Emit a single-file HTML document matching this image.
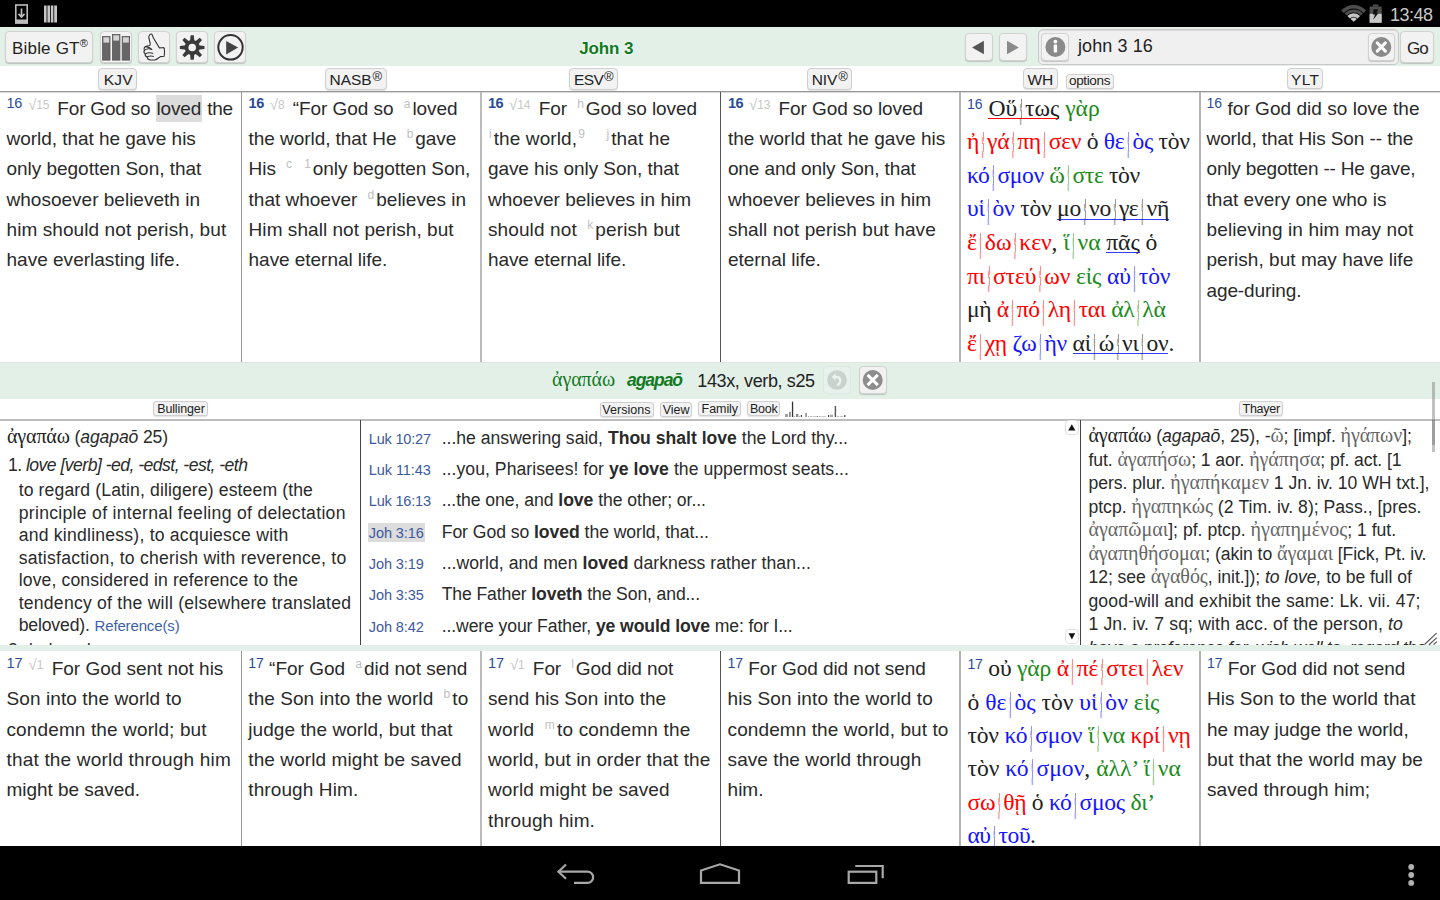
<!DOCTYPE html>
<html><head><meta charset="utf-8">
<style>
*{margin:0;padding:0;box-sizing:border-box}
html,body{width:1440px;height:900px;overflow:hidden;background:#fff;font-family:"Liberation Sans",sans-serif;color:#222}
.abs{position:absolute}
.ln{position:absolute;white-space:nowrap;line-height:normal}
.mk{display:inline-block;width:0;height:0;vertical-align:baseline}
#status{left:0;top:0;width:1440px;height:27px;background:#000}
#toolbar{left:0;top:27px;width:1440px;height:39px;background:#e3f0e8}
#nav{left:0;top:846px;width:1440px;height:54px;background:#000}
.btn{position:absolute;background:#f2f2f2;border:1px solid #d2d2d2;border-radius:4px;box-shadow:0 1px 1px rgba(0,0,0,.18)}
.lbl{position:absolute;background:#f2f2f2;border:1px solid #cfcfcf;border-radius:4px;box-shadow:0 1px 1px rgba(0,0,0,.12);font-size:15px;color:#222;text-align:center;line-height:19px}
.lbls{position:absolute;background:#f2f2f2;border:1px solid #cfcfcf;border-radius:3px;box-shadow:0 1px 1px rgba(0,0,0,.12);font-size:12.5px;color:#333;text-align:center;line-height:13px}
.hline{position:absolute;height:1px}
.vline{position:absolute;width:1px}
/* text classes */
.v{font-size:19px;color:#2a2a2a}
.vn{font-size:14.5px;color:#2a4b98;vertical-align:7px;margin-right:6px}
.vnb{font-weight:bold;letter-spacing:-0.5px}
.vn2{font-size:14px;color:#2a4b98;vertical-align:7px}
.sq{font-size:15px;vertical-align:-1px;line-height:0;margin-right:0}
.vr{font-size:12px;color:#c8c8c8;vertical-align:6px;margin-right:3px}
.fn{font-size:12px;color:#c0c0c0;vertical-align:7px;margin:0 2px 0 5px}
.fn0{margin-left:1px}
.hl{background:#dcdcdc;padding:3px 1px 3px 1px}
.gk{font-family:"Liberation Serif",serif;font-size:23.6px;color:#222}
.gk .vn2{font-family:"Liberation Sans",sans-serif;font-size:14px}
.gk .k{color:#222}
.gk .r{color:#f00}
.gk .b{color:#1515ff}
.gk .gr{color:#1a8a1a}
.gk .ur{background:linear-gradient(#f00,#f00) 0 calc(100% - 1.2px)/100% 1.3px no-repeat}
.gk .ub{background:linear-gradient(#3a3aff,#3a3aff) 0 calc(100% - 1.2px)/100% 1.3px no-repeat}
.bb{display:inline-block;width:8px;height:19.6px;vertical-align:-3.9px;opacity:.45;background:linear-gradient(currentColor,currentColor) 3.5px 0/1.2px 8.8px no-repeat,linear-gradient(currentColor,currentColor) 3.5px 11px/1.2px 8.6px no-repeat}
.lx{font-size:17.6px;color:#2a2a2a}
.gkl{font-family:"Liberation Serif",serif;font-size:20px;color:#222}
.gkd{font-family:"Liberation Serif",serif;font-size:20px;color:#222}
.gkt{font-family:"Liberation Serif",serif;font-size:20px;color:#666}
.rf{font-size:15px;color:#3f5fa6}
.rfl{font-size:14.5px;color:#3a5aa0}
.hgk{font-family:"Liberation Serif",serif;font-size:20px;color:#127a22}
.hbi{font-size:17.5px;font-weight:bold;font-style:italic;color:#127a22}
.hnum{font-size:18px;color:#222}
.tb{font-size:17px;color:#222}
.reg{font-size:11px;vertical-align:7px}
.lab{font-size:15.5px;color:#222}
.labm{font-size:13.5px;color:#222}
.labs{font-size:12.5px;color:#222}
.reg2{font-size:13px;vertical-align:4px;line-height:0;margin-left:1px}
.title{font-size:17px;font-weight:bold;color:#0e7a1e;text-shadow:0 0 2px #fff,0 0 2px #fff}
.srch{font-size:18px;color:#222}
.time{font-size:18px;color:#c8c8c8}
</style></head><body>
<div id="status" class="abs"></div>
<div id="toolbar" class="abs"></div>
<div id="nav" class="abs"></div>
<!-- toolbar buttons -->
<div class="btn" style="left:5px;top:31px;width:88px;height:32px"></div>
<div class="btn" style="left:100px;top:31px;width:32px;height:32px"></div>
<div class="btn" style="left:138px;top:31px;width:32px;height:32px"></div>
<div class="btn" style="left:176px;top:31px;width:32px;height:32px"></div>
<div class="btn" style="left:214px;top:31px;width:32px;height:32px"></div>
<div class="btn" style="left:965px;top:33px;width:28px;height:28px"></div>
<div class="btn" style="left:999px;top:33px;width:28px;height:28px"></div>
<div class="abs" style="left:1038px;top:29px;width:361px;height:36px;background:#f0f0f0;border:1px solid #c8c8c8;border-radius:5px;box-shadow:inset 0 1px 1px rgba(0,0,0,.08)"></div>
<div class="btn" style="left:1041px;top:33px;width:28px;height:28px"></div>
<div class="btn" style="left:1368px;top:33px;width:27px;height:28px"></div>
<div class="btn" style="left:1400px;top:31px;width:34px;height:32px"></div>
<!-- version labels -->
<div class="lbl" style="left:98px;top:68px;width:39px;height:21.5px"></div>
<div class="lbl" style="left:325px;top:68px;width:62px;height:21.5px"></div>
<div class="lbl" style="left:568.5px;top:68px;width:49px;height:21.5px"></div>
<div class="lbl" style="left:807px;top:68px;width:45px;height:21.5px"></div>
<div class="lbl" style="left:1023px;top:68px;width:35px;height:21px"></div>
<div class="lbls" style="left:1066px;top:73.5px;width:48px;height:15px"></div>
<div class="lbl" style="left:1287px;top:68px;width:36px;height:21px"></div>
<!-- lines -->
<div class="hline" style="left:0;top:91px;width:1440px;background:#999"></div>
<div class="hline" style="left:0;top:92px;width:1440px;background:#d8d8d8"></div>
<div class="vline" style="left:241px;top:92px;height:271px;background:#999"></div>
<div class="vline" style="left:480px;top:92px;height:271px;width:2px;background:#bbb"></div>
<div class="vline" style="left:720px;top:92px;height:271px;background:#555"></div>
<div class="vline" style="left:959px;top:92px;height:271px;width:2px;background:#b3b3b3"></div>
<div class="vline" style="left:1199px;top:92px;height:271px;width:2px;background:#b3b3b3"></div>
<!-- lex header -->
<div class="abs" style="left:0;top:362px;width:1440px;height:1px;background:#e2e2e2"></div><div class="abs" style="left:0;top:363px;width:1440px;height:36px;background:#e3f0e8"></div>
<div class="btn" style="left:823px;top:366px;width:28px;height:28px;background:#e8f1ec;border-color:#dfe7e2;box-shadow:none"></div>
<div class="btn" style="left:859px;top:366px;width:28px;height:28px"></div>
<div class="lbls" style="left:153px;top:401px;width:55px;height:15px"></div>
<div class="lbls" style="left:599.5px;top:402px;width:54.5px;height:14.5px"></div>
<div class="lbls" style="left:660px;top:402px;width:32px;height:14.5px"></div>
<div class="lbls" style="left:698px;top:401px;width:43px;height:15px"></div>
<div class="lbls" style="left:746.5px;top:401px;width:33.5px;height:15px"></div>
<div class="lbls" style="left:1239px;top:401px;width:44px;height:15px"></div>
<div class="hline" style="left:0;top:418.5px;width:1440px;height:2px;background:#bdbdbd"></div>
<div class="vline" style="left:360px;top:420px;height:225px;background:#444"></div>
<div class="vline" style="left:1080px;top:420px;height:225px;background:#444"></div>
<div class="btn" style="left:1065px;top:420px;width:14px;height:15px;background:#fff;border-color:#e0e0e0;box-shadow:none"></div>
<div class="btn" style="left:1065px;top:629px;width:14px;height:15px;background:#fff;border-color:#e0e0e0;box-shadow:none"></div>
<div class="hl abs" style="left:367.5px;top:523px;width:57px;height:19px;padding:0"></div>
<div class="abs" style="left:1432px;top:382px;width:3px;height:70px;background:rgba(120,120,120,.45)"></div><div class="abs" style="left:1432px;top:420px;width:3px;height:25px;background:rgba(90,90,90,.35)"></div>
<!-- separator -->
<div class="abs" style="left:0;top:645px;width:1440px;height:6px;background:#e3f0e8"></div>
<div class="vline" style="left:241px;top:651px;height:195px;background:#999"></div>
<div class="vline" style="left:480px;top:651px;height:195px;width:2px;background:#bbb"></div>
<div class="vline" style="left:720px;top:651px;height:195px;background:#555"></div>
<div class="vline" style="left:959px;top:651px;height:195px;width:2px;background:#b3b3b3"></div>
<div class="vline" style="left:1199px;top:651px;height:195px;width:2px;background:#b3b3b3"></div>
<!-- status bar icons -->
<svg class="abs" style="left:0;top:0" width="80" height="27" viewBox="0 0 80 27">
  <rect x="15.8" y="5" width="11.4" height="18" fill="none" stroke="#bdbdbd" stroke-width="1.6"/>
  <rect x="15" y="19.5" width="13" height="4" fill="#bdbdbd"/>
  <path d="M21.5 8.5 V16.5 M18.5 13.8 L21.5 17 L24.5 13.8" stroke="#bdbdbd" stroke-width="1.7" fill="none"/>
  <rect x="44" y="5.5" width="2.6" height="17" fill="#c4c4c4"/>
  <rect x="47.4" y="5.5" width="2.6" height="17" fill="#c4c4c4"/>
  <rect x="50.8" y="5.5" width="2.6" height="17" fill="#c4c4c4"/>
  <rect x="54.2" y="5.5" width="2.8" height="17" fill="#c4c4c4"/>
</svg>
<svg class="abs" style="left:1340px;top:0" width="50" height="27" viewBox="0 0 50 27">
  <path d="M1.22 10.56 A16.80 16.80 0 0 1 26.18 10.56 L23.51 12.97 A13.20 13.20 0 0 0 3.89 12.97 Z" fill="#4d4d4d"/><path d="M4.56 13.57 A12.30 12.30 0 0 1 22.84 13.57 L20.61 15.58 A9.30 9.30 0 0 0 6.79 15.58 Z" fill="#4d4d4d"/><path d="M7.31 16.05 A8.60 8.60 0 0 1 20.09 16.05 L17.42 18.45 A5.00 5.00 0 0 0 9.98 18.45 Z" fill="#c4c4c4"/><path d="M10.58 18.99 A4.20 4.20 0 0 1 16.82 18.99 L13.70 21.80 Z" fill="#c8c8c8"/>
  <rect x="29.6" y="6.5" width="12.1" height="16.3" fill="#4d4d4d"/>
  <rect x="32.9" y="4.4" width="5.4" height="2.2" fill="#4d4d4d"/>
  <rect x="29.6" y="13.8" width="12.1" height="9" fill="#c8c8c8"/>
  <path d="M33.5 9.2 L38.2 9.2 L36.6 13.2 L38.3 13.2 L33.2 19.8 L35 14.6 L33 14.6 Z" fill="#111"/>
</svg>
<!-- toolbar icons -->
<svg class="abs" style="left:98px;top:28px" width="38" height="38" viewBox="0 0 38 38">
  <rect x="4.6" y="8.5" width="7.4" height="23.6" fill="#666" stroke="#555" stroke-width="0.8"/>
  <rect x="5.4" y="9.3" width="5.8" height="5.3" fill="#d4d4d4"/>
  <rect x="14.5" y="6.5" width="7.4" height="25.6" fill="#666" stroke="#555" stroke-width="0.8"/>
  <rect x="15.3" y="7.3" width="5.8" height="5.3" fill="#d4d4d4"/>
  <rect x="24.2" y="8.5" width="7.4" height="23.6" fill="#666" stroke="#555" stroke-width="0.8"/>
  <rect x="25" y="9.3" width="5.8" height="5.3" fill="#d4d4d4"/>
</svg>
<svg class="abs" style="left:136px;top:28px" width="38" height="38" viewBox="0 0 38 38">
  <g fill="none" stroke="#333" stroke-width="1.1" stroke-linejoin="round">
  <path d="M15.2 6 C13.6 6.2 12.6 8 12.9 10 L14.3 15.8 C14.4 17 13.8 17.6 12.8 17.8 L10 18.4 C8.2 18.9 7.7 20.8 8.4 22.3 C7.7 23.7 8.1 25.3 9.2 26 C9 27.3 9.8 28.6 11.1 29.1 C11.4 30.6 12.7 31.9 14.4 32 L18.8 32 C20.8 31.6 22.8 29.6 24.4 28.6 L28.2 28.2 C28.6 25 28.6 22.5 28.3 20.5 C28.1 19.8 27.4 19.6 26.6 19.7 L23.4 19.9 L17 9.3 C16.6 7.2 16.2 6 15.2 6 Z"/>
  <path d="M8.5 22.3 C10.5 20.8 14 20.6 16.3 21.8"/>
  <path d="M9.2 26 C11.4 24.6 14.6 24.4 17.2 25.4"/>
  <path d="M11.1 29.1 C13 28 15.6 27.8 17.8 28.6"/>
  <path d="M10 18.6 C12 19 14 19.8 15.4 21"/>
  </g>
</svg>
<svg class="abs" style="left:174px;top:28px" width="38" height="38" viewBox="0 0 38 38">
  <g transform="translate(18.2 19.5)" fill="#3a3a3a">
    <g id="tooth"><path d="M-1.6 -12.3 H1.6 L2.2 -6 H-2.2 Z"/></g>
    <path d="M-1.6 -12.3 H1.6 L2.2 -6 H-2.2 Z" transform="rotate(45)"/>
    <path d="M-1.6 -12.3 H1.6 L2.2 -6 H-2.2 Z" transform="rotate(90)"/>
    <path d="M-1.6 -12.3 H1.6 L2.2 -6 H-2.2 Z" transform="rotate(135)"/>
    <path d="M-1.6 -12.3 H1.6 L2.2 -6 H-2.2 Z" transform="rotate(180)"/>
    <path d="M-1.6 -12.3 H1.6 L2.2 -6 H-2.2 Z" transform="rotate(225)"/>
    <path d="M-1.6 -12.3 H1.6 L2.2 -6 H-2.2 Z" transform="rotate(270)"/>
    <path d="M-1.6 -12.3 H1.6 L2.2 -6 H-2.2 Z" transform="rotate(315)"/>
    <circle r="7.6"/>
  </g>
  <circle cx="18.2" cy="19.5" r="3.8" fill="#f2f2f2"/>
</svg>
<svg class="abs" style="left:212px;top:28px" width="38" height="38" viewBox="0 0 38 38">
  <circle cx="18.5" cy="19.3" r="12.2" fill="none" stroke="#333" stroke-width="2"/>
  <path d="M14.2 12.9 L26.1 19.5 L14.2 26.4 Z" fill="#444"/>
</svg>
<svg class="abs" style="left:955px;top:28px" width="80" height="38" viewBox="0 0 80 38">
  <path d="M17.1 19.5 L28.9 12.8 L28.9 26.3 Z" fill="#555"/>
  <path d="M63.8 19.5 L52 12.8 L52 26.3 Z" fill="#8a8a8a"/>
</svg>
<svg class="abs" style="left:1040px;top:28px" width="30" height="38" viewBox="0 0 30 38">
  <circle cx="15.4" cy="19" r="10" fill="#8a8a8a"/>
  <circle cx="15.4" cy="13.6" r="1.9" fill="#fff"/>
  <rect x="13.7" y="16.6" width="3.4" height="8" rx="1" fill="#fff"/>
</svg>
<svg class="abs" style="left:1366px;top:28px" width="30" height="38" viewBox="0 0 30 38">
  <circle cx="15.3" cy="19" r="10" fill="#8a8a8a"/>
  <path d="M11.2 14.9 L19.4 23.1 M19.4 14.9 L11.2 23.1" stroke="#fff" stroke-width="3" stroke-linecap="round"/>
</svg>
<!-- lex header icons -->
<svg class="abs" style="left:820px;top:363px" width="70" height="36" viewBox="0 0 70 36">
  <circle cx="17" cy="17" r="9.8" fill="#c9d2cd"/>
  <path d="M15.2 14 H16.5 C20.2 14 21.2 17.8 19.6 20 L17.8 22" stroke="#eef4f0" stroke-width="2.3" fill="none" stroke-linecap="round"/>
  <path d="M11.8 14 L15.6 10.4 L15.6 17.6 Z" fill="#eef4f0"/>
  <circle cx="52.7" cy="17" r="10" fill="#8d8d8d"/>
  <path d="M48.7 13 L56.7 21 M56.7 13 L48.7 21" stroke="#fff" stroke-width="3.1" stroke-linecap="square"/>
</svg>
<!-- histogram -->
<svg class="abs" style="left:780px;top:396px" width="70" height="24" viewBox="0 0 70 24">
  <rect x="5.1" y="18" width="2.7" height="3" fill="#999"/>
  <rect x="9.2" y="15.8" width="1.5" height="5.2" fill="#777"/>
  <rect x="11.9" y="5.6" width="1.3" height="15.4" fill="#333"/>
  <rect x="14" y="20" width="1" height="1" fill="#aaa"/>
  <rect x="16" y="18" width="2.3" height="3" fill="#888"/>
  <rect x="19" y="20" width="1" height="1" fill="#aaa"/>
  <rect x="20.8" y="19" width="1.2" height="2" fill="#444"/>
  <rect x="25.3" y="16.8" width="1.5" height="4.2" fill="#888"/>
  <rect x="28" y="20" width="1" height="1" fill="#aaa"/>
  <rect x="30.5" y="20" width="1" height="1" fill="#777"/>
  <rect x="32.5" y="20.2" width="4.5" height="0.8" fill="#bbb"/>
  <rect x="37" y="20" width="1" height="1" fill="#777"/>
  <rect x="39.5" y="20" width="1" height="1" fill="#777"/>
  <rect x="41.5" y="20.2" width="4.5" height="0.8" fill="#bbb"/>
  <rect x="48" y="19" width="1.2" height="2" fill="#444"/>
  <rect x="50" y="18.7" width="3" height="2.3" fill="#aaa"/>
  <rect x="54.7" y="10" width="1.4" height="11" fill="#555"/>
  <rect x="57.4" y="20" width="1" height="1" fill="#888"/>
  <rect x="59.5" y="20.2" width="4" height="0.8" fill="#bbb"/>
  <rect x="64.2" y="19" width="1.2" height="2" fill="#444"/>
</svg>
<!-- scroll arrows -->
<svg class="abs" style="left:1064px;top:419px" width="16" height="226" viewBox="0 0 16 226">
  <path d="M4.2 11.4 L7.8 5.2 L11.4 11.4 Z" fill="#111"/>
  <path d="M4.5 214.2 L11.2 214.2 L7.9 220.5 Z" fill="#111"/>
</svg>
<!-- resize grip -->
<svg class="abs" style="left:1420px;top:628px" width="20" height="18" viewBox="0 0 20 18">
  <path d="M4.5 16.5 L16.6 5.1 M8.8 17 L16.8 9.6 M13.6 16.5 L16.8 13.7" stroke="#555" stroke-width="1.1"/>
</svg>
<!-- nav bar icons -->
<svg class="abs" style="left:540px;top:846px" width="360" height="54" viewBox="0 0 360 54">
  <g fill="none" stroke="#a8a8a8" stroke-width="2.2">
    <path d="M26 18.5 L18.5 25.7 L26 32.8"/>
    <path d="M18.5 25.7 H47.5 A5.6 5.6 0 0 1 47.5 36.9 H34"/>
    <path d="M161 24.5 L180 18.3 L199 24.5 V36.9 H161 Z"/>
    <rect x="308.7" y="25.7" width="27.6" height="11.2"/>
    <path d="M315.3 20 H342.7 V32.3"/>
  </g>
</svg>
<svg class="abs" style="left:1400px;top:846px" width="24" height="54" viewBox="0 0 24 54">
  <g fill="#b0b0b0"><circle cx="11.2" cy="21" r="2.9"/><circle cx="11.2" cy="29" r="2.9"/><circle cx="11.2" cy="36.9" r="2.9"/></g>
</svg>


<div class="ln v" style="left:6.50px;top:94.50px;letter-spacing:-0.191px;"><span class="vn">16</span><span class="vr"><span class="sq">√</span>15</span> For God so <span class="hl">loved</span> the</div>
<div class="ln v" style="left:6.50px;top:127.81px;letter-spacing:-0.036px;">world, that he gave his</div>
<div class="ln v" style="left:6.50px;top:158.10px;letter-spacing:-0.028px;">only begotten Son, that</div>
<div class="ln v" style="left:6.50px;top:188.50px;letter-spacing:0.009px;">whosoever believeth in</div>
<div class="ln v" style="left:6.50px;top:218.81px;letter-spacing:0.085px;">him should not perish, but</div>
<div class="ln v" style="left:6.50px;top:249.21px;letter-spacing:0.013px;">have everlasting life.</div>
<div class="ln v" style="left:248.60px;top:94.50px;letter-spacing:-0.052px;"><span class="vn vnb">16</span><span class="vr"><span class="sq">√</span>8</span> “For God so <span class="fn">a</span>loved</div>
<div class="ln v" style="left:248.60px;top:126.81px;letter-spacing:-0.058px;">the world, that He <span class="fn">b</span>gave</div>
<div class="ln v" style="left:248.60px;top:157.10px;letter-spacing:-0.063px;">His <span class="fn">c</span> <span class="fn">1</span>only begotten Son,</div>
<div class="ln v" style="left:248.60px;top:187.50px;letter-spacing:-0.006px;">that whoever <span class="fn">d</span>believes in</div>
<div class="ln v" style="left:248.60px;top:218.81px;letter-spacing:0.051px;">Him shall not perish, but</div>
<div class="ln v" style="left:248.60px;top:249.21px;letter-spacing:-0.046px;">have eternal life.</div>
<div class="ln v" style="left:487.90px;top:94.50px;letter-spacing:-0.063px;"><span class="vn vnb">16</span><span class="vr"><span class="sq">√</span>14</span> For <span class="fn">h</span>God so loved</div>
<div class="ln v" style="left:487.90px;top:126.81px;letter-spacing:0.114px;"><span class="fn fn0">i</span>the world,<span class="fn fn0">9</span><span style="margin-left:9px"></span> <span class="fn">j</span>that he</div>
<div class="ln v" style="left:487.90px;top:158.10px;letter-spacing:-0.050px;">gave his only Son, that</div>
<div class="ln v" style="left:487.90px;top:188.50px;letter-spacing:0.023px;">whoever believes in him</div>
<div class="ln v" style="left:487.90px;top:217.81px;letter-spacing:0.122px;">should not <span class="fn">k</span>perish but</div>
<div class="ln v" style="left:487.90px;top:249.21px;letter-spacing:-0.062px;">have eternal life.</div>
<div class="ln v" style="left:727.90px;top:94.50px;letter-spacing:-0.089px;"><span class="vn vnb">16</span><span class="vr"><span class="sq">√</span>13</span> For God so loved</div>
<div class="ln v" style="left:727.90px;top:127.81px;letter-spacing:0.033px;">the world that he gave his</div>
<div class="ln v" style="left:727.90px;top:158.10px;letter-spacing:-0.103px;">one and only Son, that</div>
<div class="ln v" style="left:727.90px;top:188.50px;letter-spacing:0.023px;">whoever believes in him</div>
<div class="ln v" style="left:727.90px;top:218.81px;letter-spacing:0.077px;">shall not perish but have</div>
<div class="ln v" style="left:727.90px;top:249.21px;letter-spacing:-0.004px;">eternal life.</div>
<div class="ln v" style="left:1206.50px;top:94.50px;letter-spacing:0.037px;"><span class="vn2">16</span> for God did so love the</div>
<div class="ln v" style="left:1206.50px;top:127.81px;letter-spacing:-0.088px;">world, that His Son -- the</div>
<div class="ln v" style="left:1206.50px;top:158.10px;letter-spacing:-0.178px;">only begotten -- He gave,</div>
<div class="ln v" style="left:1206.50px;top:188.50px;letter-spacing:0.022px;">that every one who is</div>
<div class="ln v" style="left:1206.50px;top:218.81px;letter-spacing:0.124px;">believing in him may not</div>
<div class="ln v" style="left:1206.50px;top:249.21px;letter-spacing:0.034px;">perish, but may have life</div>
<div class="ln v" style="left:1206.50px;top:279.50px;letter-spacing:-0.120px;">age-during.</div>
<div class="ln gk" style="left:967.00px;top:94.71px;letter-spacing:-0.034px;"><span class="vn2">16</span> <span class="k ur">Οὕ<i class="bb">¦</i>τως</span> <span class="gr">γὰρ</span></div>
<div class="ln gk" style="left:967.00px;top:128.21px;letter-spacing:-0.319px;"><span class="r">ἠ<i class="bb">¦</i>γά<i class="bb">¦</i>πη<i class="bb">¦</i>σεν</span> <span class="k">ὁ</span> <span class="b">θε<i class="bb">¦</i>ὸς</span> <span class="k">τὸν</span></div>
<div class="ln gk" style="left:967.00px;top:161.60px;letter-spacing:-0.378px;"><span class="b">κό<i class="bb">¦</i>σμον</span> <span class="gr">ὥ<i class="bb">¦</i>στε</span> <span class="k">τὸν</span></div>
<div class="ln gk" style="left:967.00px;top:195.10px;letter-spacing:-0.245px;"><span class="b">υἱ<i class="bb">¦</i>ὸν</span> <span class="k">τὸν</span> <span class="k ub">μο<i class="bb">¦</i>νο<i class="bb">¦</i>γε<i class="bb">¦</i>νῆ</span></div>
<div class="ln gk" style="left:967.00px;top:228.90px;letter-spacing:-0.074px;"><span class="r">ἔ<i class="bb">¦</i>δω<i class="bb">¦</i>κεν</span><span class="k">,</span> <span class="gr">ἵ<i class="bb">¦</i>να</span> <span class="k ub">πᾶς</span> <span class="k">ὁ</span></div>
<div class="ln gk" style="left:967.00px;top:262.50px;letter-spacing:-0.128px;"><span class="r">πι<i class="bb">¦</i>στεύ<i class="bb">¦</i>ων</span> <span class="gr">εἰς</span> <span class="b">αὐ<i class="bb">¦</i>τὸν</span></div>
<div class="ln gk" style="left:967.00px;top:296.21px;letter-spacing:-0.366px;"><span class="k">μὴ</span> <span class="r">ἀ<i class="bb">¦</i>πό<i class="bb">¦</i>λη<i class="bb">¦</i>ται</span> <span class="gr">ἀλ<i class="bb">¦</i>λὰ</span></div>
<div class="ln gk" style="left:967.00px;top:329.81px;letter-spacing:-0.271px;"><span class="r">ἔ<i class="bb">¦</i>χῃ</span> <span class="b">ζω<i class="bb">¦</i>ὴν</span> <span class="k ub">αἰ<i class="bb">¦</i>ώ<i class="bb">¦</i>νι<i class="bb">¦</i>ον</span><span class="k">.</span></div>
<div class="ln v" style="left:6.50px;top:655.00px;letter-spacing:-0.027px;"><span class="vn">17</span><span class="vr"><span class="sq">√</span>1</span> For God sent not his</div>
<div class="ln v" style="left:6.50px;top:688.31px;letter-spacing:0.094px;">Son into the world to</div>
<div class="ln v" style="left:6.50px;top:718.60px;letter-spacing:0.122px;">condemn the world; but</div>
<div class="ln v" style="left:6.50px;top:749.00px;letter-spacing:0.185px;">that the world through him</div>
<div class="ln v" style="left:6.50px;top:779.31px;letter-spacing:-0.043px;">might be saved.</div>
<div class="ln v" style="left:248.30px;top:655.00px;letter-spacing:-0.015px;"><span class="vn2">17</span> “For God <span class="fn">a</span>did not send</div>
<div class="ln v" style="left:248.30px;top:687.31px;letter-spacing:0.053px;">the Son into the world <span class="fn">b</span>to</div>
<div class="ln v" style="left:248.30px;top:718.60px;letter-spacing:0.063px;">judge the world, but that</div>
<div class="ln v" style="left:248.30px;top:749.00px;letter-spacing:0.090px;">the world might be saved</div>
<div class="ln v" style="left:248.30px;top:779.31px;letter-spacing:0.102px;">through Him.</div>
<div class="ln v" style="left:488.00px;top:655.00px;letter-spacing:-0.093px;"><span class="vn">17</span><span class="vr"><span class="sq">√</span>1</span> For <span class="fn">l</span>God did not</div>
<div class="ln v" style="left:488.00px;top:688.31px;letter-spacing:0.035px;">send his Son into the</div>
<div class="ln v" style="left:488.00px;top:717.60px;letter-spacing:0.182px;">world <span class="fn">m</span>to condemn the</div>
<div class="ln v" style="left:488.00px;top:749.00px;letter-spacing:0.055px;">world, but in order that the</div>
<div class="ln v" style="left:488.00px;top:779.31px;letter-spacing:0.108px;">world might be saved</div>
<div class="ln v" style="left:488.00px;top:809.60px;letter-spacing:0.115px;">through him.</div>
<div class="ln v" style="left:727.60px;top:655.00px;letter-spacing:-0.046px;"><span class="vn2">17</span> For God did not send</div>
<div class="ln v" style="left:727.60px;top:688.31px;letter-spacing:0.100px;">his Son into the world to</div>
<div class="ln v" style="left:727.60px;top:718.60px;letter-spacing:0.090px;">condemn the world, but to</div>
<div class="ln v" style="left:727.60px;top:749.00px;letter-spacing:0.071px;">save the world through</div>
<div class="ln v" style="left:727.60px;top:779.31px;letter-spacing:-0.027px;">him.</div>
<div class="ln v" style="left:1206.90px;top:655.00px;letter-spacing:-0.042px;"><span class="vn2">17</span> For God did not send</div>
<div class="ln v" style="left:1206.90px;top:688.31px;letter-spacing:0.064px;">His Son to the world that</div>
<div class="ln v" style="left:1206.90px;top:718.60px;letter-spacing:0.003px;">he may judge the world,</div>
<div class="ln v" style="left:1206.90px;top:749.00px;letter-spacing:0.110px;">but that the world may be</div>
<div class="ln v" style="left:1206.90px;top:779.31px;letter-spacing:0.095px;">saved through him;</div>
<div class="ln rfl" style="left:368.80px;top:430.60px;letter-spacing:-0.189px;">Luk 10:27</div>
<div class="ln lx" style="left:441.70px;top:427.60px;letter-spacing:-0.003px;">...he answering said, <b>Thou shalt love</b> the Lord thy...</div>
<div class="ln rfl" style="left:368.80px;top:461.96px;letter-spacing:-0.069px;">Luk 11:43</div>
<div class="ln lx" style="left:441.70px;top:458.96px;letter-spacing:0.045px;">...you, Pharisees! for <b>ye love</b> the uppermost seats...</div>
<div class="ln rfl" style="left:368.80px;top:493.31px;letter-spacing:-0.189px;">Luk 16:13</div>
<div class="ln lx" style="left:441.70px;top:490.31px;letter-spacing:-0.048px;">...the one, and <b>love</b> the other; or...</div>
<div class="ln rfl" style="left:368.80px;top:524.65px;letter-spacing:-0.105px;">Joh 3:16</div>
<div class="ln lx" style="left:441.70px;top:521.65px;letter-spacing:-0.050px;">For God so <b>loved</b> the world, that...</div>
<div class="ln rfl" style="left:368.80px;top:556.00px;letter-spacing:-0.105px;">Joh 3:19</div>
<div class="ln lx" style="left:441.70px;top:553.00px;letter-spacing:0.051px;">...world, and men <b>loved</b> darkness rather than...</div>
<div class="ln rfl" style="left:368.80px;top:587.35px;letter-spacing:-0.105px;">Joh 3:35</div>
<div class="ln lx" style="left:441.70px;top:584.35px;letter-spacing:-0.118px;">The Father <b>loveth</b> the Son, and...</div>
<div class="ln rfl" style="left:368.80px;top:618.71px;letter-spacing:-0.105px;">Joh 8:42</div>
<div class="ln lx" style="left:441.70px;top:615.71px;letter-spacing:-0.105px;">...were your Father, <b>ye would love</b> me: for I...</div>
<div class="ln hgk" style="left:552.00px;top:368.31px;letter-spacing:-0.091px;">ἀγαπάω</div>
<div class="ln hbi" style="left:627.00px;top:370.31px;letter-spacing:-1.047px;">agapaō</div>
<div class="ln hnum" style="left:697.30px;top:370.81px;letter-spacing:-0.379px;">143x, verb, s25</div>
<div class="ln tb" style="left:12.00px;top:37.00px;letter-spacing:0.194px;">Bible GT<span class="reg">®</span></div>
<div class="ln title" style="left:579.20px;top:39.00px;letter-spacing:-0.116px;">John 3</div>
<div class="ln srch" style="left:1078.00px;top:35.50px;letter-spacing:0.102px;">john 3 16</div>
<div class="ln tb" style="left:1407.00px;top:39.00px;letter-spacing:-1.044px;">Go</div>
<div class="ln time" style="left:1390.00px;top:5.00px;letter-spacing:-0.529px;">13:48</div>
<div class="ln lab" style="left:103.75px;top:70.81px;letter-spacing:0.238px;">KJV</div>
<div class="ln lab" style="left:329.60px;top:70.81px;letter-spacing:-0.083px;">NASB<span class="reg2">®</span></div>
<div class="ln lab" style="left:574.10px;top:70.90px;letter-spacing:-0.677px;">ESV<span class="reg2">®</span></div>
<div class="ln lab" style="left:811.70px;top:70.90px;letter-spacing:-0.109px;">NIV<span class="reg2">®</span></div>
<div class="ln lab" style="left:1027.60px;top:71.00px;letter-spacing:-0.114px;">WH</div>
<div class="ln labm" style="left:1069.00px;top:73.40px;letter-spacing:-0.350px;">options</div>
<div class="ln lab" style="left:1291.00px;top:70.90px;letter-spacing:0.340px;">YLT</div>
<div class="ln labs" style="left:157.20px;top:401.81px;letter-spacing:-0.127px;">Bullinger</div>
<div class="ln labs" style="left:1242.50px;top:401.90px;letter-spacing:-0.234px;">Thayer</div>
<div class="ln labs" style="left:602.30px;top:402.60px;letter-spacing:0.043px;">Versions</div>
<div class="ln labs" style="left:662.70px;top:402.60px;letter-spacing:-0.044px;">View</div>
<div class="ln labs" style="left:701.60px;top:401.71px;letter-spacing:-0.069px;">Family</div>
<div class="ln labs" style="left:749.90px;top:401.71px;letter-spacing:-0.200px;">Book</div>
<div class="abs" style="left:0px;top:651px;width:1440px;height:195px;overflow:hidden">
<div class="ln gk" style="left:967.50px;top:3.90px;letter-spacing:-0.223px;"><span class="vn2">17</span> <span class="k">οὐ</span> <span class="gr">γὰρ</span> <span class="r">ἀ<i class="bb">¦</i>πέ<i class="bb">¦</i>στει<i class="bb">¦</i>λεν</span></div>
<div class="ln gk" style="left:967.50px;top:37.50px;letter-spacing:-0.002px;"><span class="k">ὁ</span> <span class="b">θε<i class="bb">¦</i>ὸς</span> <span class="k">τὸν</span> <span class="b">υἱ<i class="bb">¦</i>ὸν</span> <span class="gr">εἰς</span></div>
<div class="ln gk" style="left:967.50px;top:70.81px;letter-spacing:-0.205px;"><span class="k">τὸν</span> <span class="b">κό<i class="bb">¦</i>σμον</span> <span class="gr">ἵ<i class="bb">¦</i>να</span> <span class="r">κρί<i class="bb">¦</i>νῃ</span></div>
<div class="ln gk" style="left:967.50px;top:104.31px;letter-spacing:-0.005px;"><span class="k">τὸν</span> <span class="b">κό<i class="bb">¦</i>σμον</span><span class="k">,</span> <span class="gr">ἀλλ’ ἵ<i class="bb">¦</i>να</span></div>
<div class="ln gk" style="left:967.50px;top:137.81px;letter-spacing:-0.301px;"><span class="r">σω<i class="bb">¦</i>θῇ</span> <span class="k">ὁ</span> <span class="b">κό<i class="bb">¦</i>σμος</span> <span class="gr">δι’</span></div>
<div class="ln gk" style="left:967.50px;top:171.21px;letter-spacing:-0.489px;"><span class="b">αὐ<i class="bb">¦</i>τοῦ</span><span class="k">.</span></div>
</div>
<div class="abs" style="left:0px;top:420px;width:1440px;height:225px;overflow:hidden">
<div class="ln lx" style="left:7.00px;top:4.50px;letter-spacing:-0.130px;"><span class="gkl">ἀγαπάω</span> (<i>agapaō</i> 25)</div>
<div class="ln lx" style="left:8.00px;top:34.81px;letter-spacing:-0.531px;">1. <i>love [verb] -ed, -edst, -est, -eth</i></div>
<div class="ln lx" style="left:18.70px;top:60.00px;letter-spacing:0.124px;">to regard (Latin, diligere) esteem (the</div>
<div class="ln lx" style="left:18.70px;top:82.50px;letter-spacing:0.298px;">principle of internal feeling of delectation</div>
<div class="ln lx" style="left:18.70px;top:105.00px;letter-spacing:0.224px;">and kindliness), to acquiesce with</div>
<div class="ln lx" style="left:18.70px;top:127.50px;letter-spacing:0.230px;">satisfaction, to cherish with reverence, to</div>
<div class="ln lx" style="left:18.70px;top:150.00px;letter-spacing:0.130px;">love, considered in reference to the</div>
<div class="ln lx" style="left:18.70px;top:172.50px;letter-spacing:0.235px;">tendency of the will (elsewhere translated</div>
<div class="ln lx" style="left:18.70px;top:195.00px;letter-spacing:-0.144px;">beloved). <span class="rf">Reference(s)</span></div>
<div class="ln lx" style="left:8.00px;top:219.50px;">2. <i>beloved</i></div>
<div class="ln lx" style="left:1088.40px;top:4.00px;letter-spacing:-0.080px;"><span class="gkd">ἀγαπάω</span> (<i>agapaō</i>, 25), -<span class="gkt">ῶ</span>; [impf. <span class="gkt">ἠγάπων</span>];</div>
<div class="ln lx" style="left:1088.40px;top:27.50px;letter-spacing:-0.073px;">fut. <span class="gkt">ἀγαπήσω</span>; 1 aor. <span class="gkt">ἠγάπησα</span>; pf. act. [1</div>
<div class="ln lx" style="left:1088.40px;top:51.00px;letter-spacing:-0.023px;">pers. plur. <span class="gkt">ἠγαπήκαμεν</span> 1 Jn. iv. 10 WH txt.],</div>
<div class="ln lx" style="left:1088.40px;top:74.50px;letter-spacing:0.012px;">ptcp. <span class="gkt">ἠγαπηκώς</span> (2 Tim. iv. 8); Pass., [pres.</div>
<div class="ln lx" style="left:1088.40px;top:98.00px;letter-spacing:0.017px;"><span class="gkt">ἀγαπῶμαι</span>]; pf. ptcp. <span class="gkt">ἠγαπημένος</span>; 1 fut.</div>
<div class="ln lx" style="left:1088.40px;top:121.50px;letter-spacing:-0.067px;"><span class="gkt">ἀγαπηθήσομαι</span>; (akin to <span class="gkt">ἄγαμαι</span> [Fick, Pt. iv.</div>
<div class="ln lx" style="left:1088.40px;top:145.00px;letter-spacing:-0.040px;">12; see <span class="gkt">ἀγαθός</span>, init.]); <i>to love,</i> to be full of</div>
<div class="ln lx" style="left:1088.40px;top:170.50px;letter-spacing:0.149px;">good-will and exhibit the same: Lk. vii. 47;</div>
<div class="ln lx" style="left:1088.40px;top:194.00px;letter-spacing:0.160px;">1 Jn. iv. 7 sq; with acc. of the person, <i>to</i></div>
<div class="ln lx" style="left:1088.40px;top:217.50px;letter-spacing:-0.391px;"><i>have a preference for, wish well to, regard the</i></div>
</div>
</body></html>
